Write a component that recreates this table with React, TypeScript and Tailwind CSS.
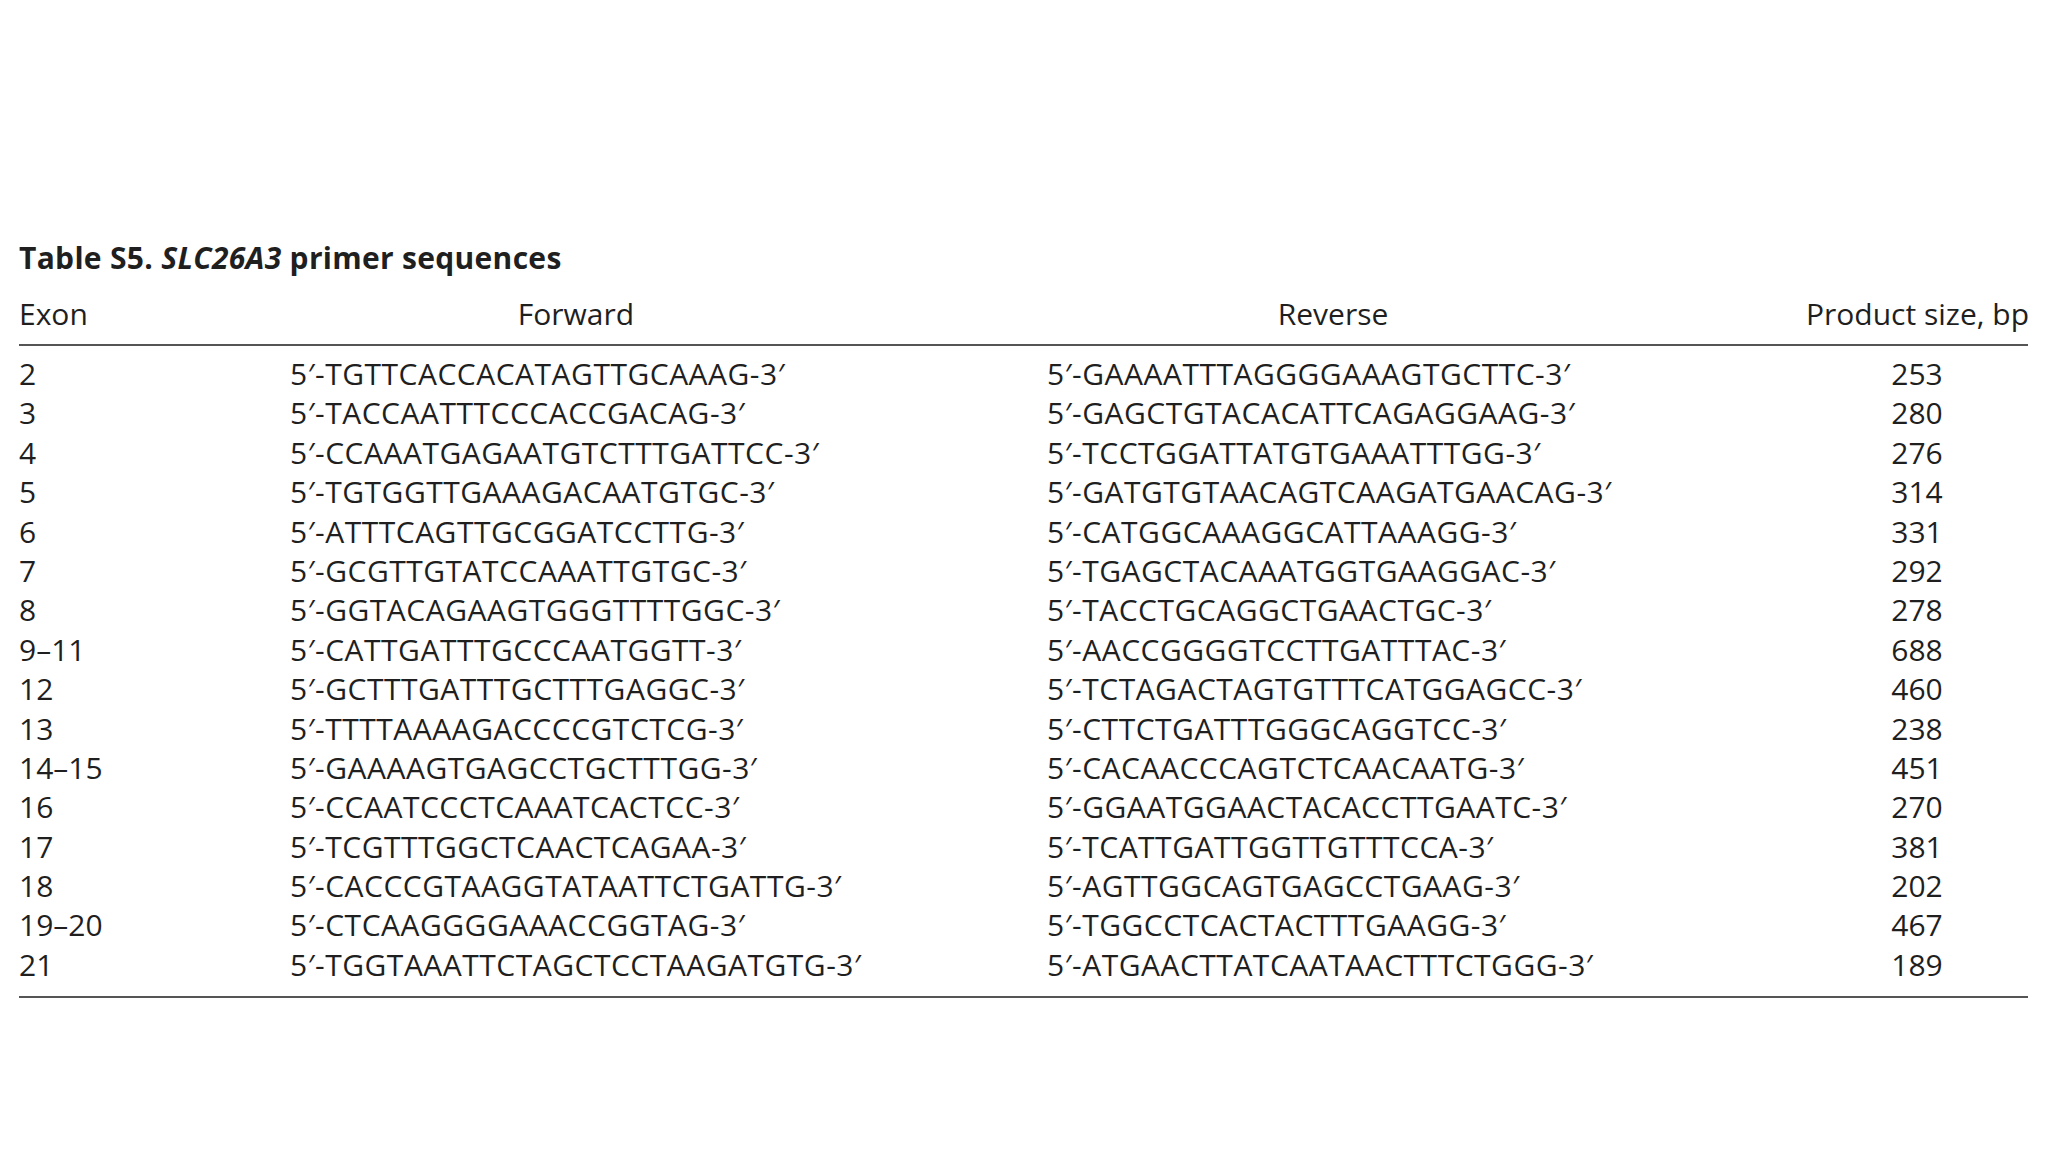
import React from "react";

const rows: [string, string, string, string][] = [
  ["2", "5′-TGTTCACCACATAGTTGCAAAG-3′", "5′-GAAAATTTAGGGGAAAGTGCTTC-3′", "253"],
  ["3", "5′-TACCAATTTCCCACCGACAG-3′", "5′-GAGCTGTACACATTCAGAGGAAG-3′", "280"],
  ["4", "5′-CCAAATGAGAATGTCTTTGATTCC-3′", "5′-TCCTGGATTATGTGAAATTTGG-3′", "276"],
  ["5", "5′-TGTGGTTGAAAGACAATGTGC-3′", "5′-GATGTGTAACAGTCAAGATGAACAG-3′", "314"],
  ["6", "5′-ATTTCAGTTGCGGATCCTTG-3′", "5′-CATGGCAAAGGCATTAAAGG-3′", "331"],
  ["7", "5′-GCGTTGTATCCAAATTGTGC-3′", "5′-TGAGCTACAAATGGTGAAGGAC-3′", "292"],
  ["8", "5′-GGTACAGAAGTGGGTTTTGGC-3′", "5′-TACCTGCAGGCTGAACTGC-3′", "278"],
  ["9–11", "5′-CATTGATTTGCCCAATGGTT-3′", "5′-AACCGGGGTCCTTGATTTAC-3′", "688"],
  ["12", "5′-GCTTTGATTTGCTTTGAGGC-3′", "5′-TCTAGACTAGTGTTTCATGGAGCC-3′", "460"],
  ["13", "5′-TTTTAAAAGACCCCGTCTCG-3′", "5′-CTTCTGATTTGGGCAGGTCC-3′", "238"],
  ["14–15", "5′-GAAAAGTGAGCCTGCTTTGG-3′", "5′-CACAACCCAGTCTCAACAATG-3′", "451"],
  ["16", "5′-CCAATCCCTCAAATCACTCC-3′", "5′-GGAATGGAACTACACCTTGAATC-3′", "270"],
  ["17", "5′-TCGTTTGGCTCAACTCAGAA-3′", "5′-TCATTGATTGGTTGTTTCCA-3′", "381"],
  ["18", "5′-CACCCGTAAGGTATAATTCTGATTG-3′", "5′-AGTTGGCAGTGAGCCTGAAG-3′", "202"],
  ["19–20", "5′-CTCAAGGGGAAACCGGTAG-3′", "5′-TGGCCTCACTACTTTGAAGG-3′", "467"],
  ["21", "5′-TGGTAAATTCTAGCTCCTAAGATGTG-3′", "5′-ATGAACTTATCAATAACTTTCTGGG-3′", "189"],
];

export default function App() {
  return (
    <div
      className="w-[2048px] h-[1152px] bg-white text-[#1f1f1f] overflow-hidden"
      style={{ fontFamily: '"Open Sans", "Noto Sans", sans-serif' }}
    >
      <div className="pt-[238px] pl-[19px] w-[2028px]">
        <div className="text-[30px] leading-[40px] font-bold tracking-[0.3px]">
          Table S5. <span className="italic">SLC26A3</span> primer sequences
        </div>
        <div className="mt-[16px] grid grid-cols-[271px_757px_759px_222px] text-[30px] leading-[40px] pb-[10px] border-b-2 border-[#555555]">
          <div>Exon</div>
          <div className="w-[572px] text-center">Forward</div>
          <div className="w-[572px] text-center">Reverse</div>
          <div className="text-right whitespace-nowrap">Product size, bp</div>
        </div>
        <div className="pt-[8px] pb-[12px] border-b-2 border-[#555555] text-[30px]">
          {rows.map((r) => (
            <div
              key={r[0]}
              className="grid grid-cols-[271px_757px_759px_222px] h-[39.4px] items-center leading-[39.4px] whitespace-nowrap"
            >
              <div>{r[0]}</div>
              <div className="tracking-[0.5px]">{r[1]}</div>
              <div className="tracking-[0.5px]">{r[2]}</div>
              <div className="text-center">{r[3]}</div>
            </div>
          ))}
        </div>
      </div>
    </div>
  );
}
